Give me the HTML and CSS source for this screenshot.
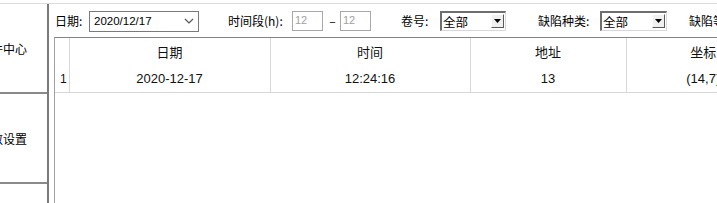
FILE: index.html
```html
<!DOCTYPE html>
<html lang="zh-CN">
<head>
    <meta charset="UTF-8">
    <title>缺陷查询</title>
    <link rel="stylesheet" href="styles.css">
</head>
<body>
    <div class="app">
        <div class="side">
            <div class="nav-btn"><span>事件中心</span></div>
            <div class="nav-btn"><span>参数设置</span></div>
            <div class="nav-btn"></div>
        </div>
        <div class="main">
            <div class="toolbar">
                <span class="lbl lbl-date">日期:</span>
                <div class="datebox">
                    <span>2020/12/17</span>
                    <svg class="chev" width="10" height="6" viewBox="0 0 10 6"><path d="M1 1 L5 5 L9 1" fill="none" stroke="#555" stroke-width="1.2"/></svg>
                </div>
                <span class="lbl lbl-hours">时间段(h):</span>
                <div class="numbox">12</div>
                <span class="dash">–</span>
                <div class="numbox">12</div>
                <span class="lbl lbl-vol">卷号:</span>
                <div class="combo combo-vol">
                    <span>全部</span>
                    <span class="drop"><svg width="7" height="4" viewBox="0 0 7 4"><path d="M0 0 H7 L3.5 4 Z" fill="#000"/></svg></span>
                </div>
                <span class="lbl lbl-type">缺陷种类:</span>
                <div class="combo combo-type">
                    <span>全部</span>
                    <span class="drop"><svg width="7" height="4" viewBox="0 0 7 4"><path d="M0 0 H7 L3.5 4 Z" fill="#000"/></svg></span>
                </div>
                <span class="lbl lbl-level">缺陷等级:</span>
            </div>
            <div class="grid">
                <table>
                    <colgroup>
                        <col class="w-row">
                        <col class="w-date">
                        <col class="w-time">
                        <col class="w-addr">
                        <col class="w-pos">
                    </colgroup>
                    <tr class="head">
                        <td class="rowhead"></td>
                        <td>日期</td>
                        <td>时间</td>
                        <td>地址</td>
                        <td>坐标</td>
                    </tr>
                    <tr>
                        <td class="rowhead">1</td>
                        <td>2020-12-17</td>
                        <td>12:24:16</td>
                        <td>13</td>
                        <td>(14,7)</td>
                    </tr>
                </table>
            </div>
        </div>
    </div>
</body>
</html>
```

FILE: styles.css
```css
body {
  margin: 0;
  padding-top: 3px;
  background: #fff;
  font-family: "Liberation Sans", "Noto Sans CJK SC", sans-serif;
  font-size: 12px;
  color: #000;
  overflow: hidden;
}

.app {
  display: flex;
  border-top: 1px solid #dcdcdc;
  height: 199px;
}

.side {
  width: 47px;
  flex-shrink: 0;
  border-right: 2px solid #7a7a7a;
  overflow: hidden;
}

.nav-btn {
  height: 88px;
  border-bottom: 2px solid #8a8a8a;
  display: flex;
  align-items: center;
  justify-content: flex-end;
  padding-right: 20px;
  white-space: nowrap;
  font-family: "Noto Sans CJK SC", sans-serif;
}

.main {
  flex: 1;
  min-width: 0;
  overflow: hidden;
}

.toolbar {
  height: 33px;
  display: flex;
  align-items: center;
  padding-left: 6px;
  white-space: nowrap;
  font-family: "Noto Sans CJK SC", sans-serif;
}

.lbl {
  flex-shrink: 0;
}

.lbl-date { width: 34px; }
.lbl-hours { width: 64px; margin-left: 29px; }
.lbl-vol { width: 39px; margin-left: 30px; }
.lbl-type { width: 62px; margin-left: 32px; }
.lbl-level { margin-left: 22px; }

.datebox {
  width: 102px;
  height: 19px;
  border: 1px solid #7a7a7a;
  display: flex;
  align-items: center;
  justify-content: space-between;
  padding: 0 3px;
  box-sizing: content-box;
  flex-shrink: 0;
  font-family: "Liberation Sans", sans-serif;
  font-size: 11.5px;
  margin-top: 1px;
}

.datebox span { padding-left: 1px; }
.chev { margin-right: 1px; }

.numbox {
  width: 27px;
  height: 18px;
  border: 1px solid #a8a8a8;
  padding-left: 2px;
  color: #a0a0a0;
  font-family: "Liberation Sans", sans-serif;
  font-size: 11px;
  line-height: 16px;
  flex-shrink: 0;
}

.dash {
  width: 17px;
  text-align: center;
  flex-shrink: 0;
  padding-left: 2px;
  box-sizing: border-box;
}

.combo {
  height: 15px;
  display: flex;
  align-items: center;
  justify-content: space-between;
  border-top: 2px solid #6e6e6e;
  border-left: 2px solid #6e6e6e;
  border-right: 1px solid #d8d8d8;
  border-bottom: 1px solid #d8d8d8;
  padding: 1px;
  flex-shrink: 0;
  font-size: 12.5px;
}

.combo-vol { width: 61px; }
.combo-type { width: 62px; }

.drop {
  width: 13px;
  height: 14px;
  background: #f0f0f0;
  border-top: 1px solid #fff;
  border-left: 1px solid #fff;
  border-right: 1px solid #5a5a5a;
  border-bottom: 1px solid #5a5a5a;
  box-sizing: border-box;
  display: flex;
  align-items: center;
  justify-content: center;
}

.grid {
  margin-left: 5px;
  border-left: 1px solid #a0a0a0;
  border-top: 1px solid #828282;
  height: 200px;
}

table {
  border-collapse: collapse;
  table-layout: fixed;
  width: 725px;
  font-size: 13px;
}

.w-row { width: 14px; }
.w-date { width: 201px; }
.w-time { width: 200px; }
.w-addr { width: 156px; }
.w-pos { width: 154px; }

td {
  text-align: center;
  border-left: 1px solid #d8d8d8;
  border-bottom: 1px solid #d8d8d8;
  padding: 0;
  height: 27px;
  white-space: nowrap;
  overflow: hidden;
  color: #111;
}

tr.head td {
  border-bottom: none;
}

td.rowhead {
  border-left: none;
  text-align: left;
  padding-left: 5px;
  font-size: 12px;
}
```
